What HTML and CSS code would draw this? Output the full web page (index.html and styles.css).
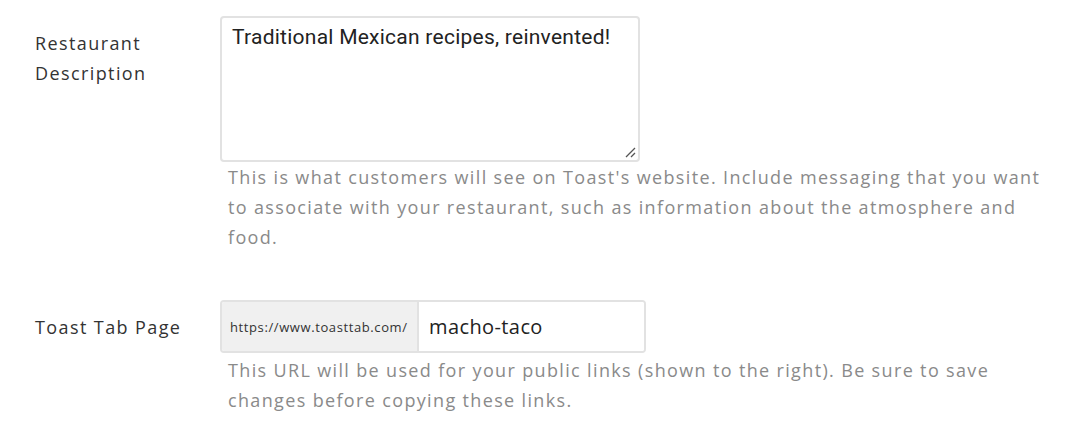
FILE: index.html
```html
<!DOCTYPE html>
<html lang="en">
<head>
<meta charset="utf-8">
<title>Restaurant settings</title>
<link rel="stylesheet" href="styles.css">
</head>
<body>
<form class="settings">
  <div class="row row-desc">
    <label class="label" for="desc">Restaurant<br>Description</label>
    <div class="field">
      <div class="textarea-wrap">
        <textarea id="desc" class="textarea">Traditional Mexican recipes, reinvented!</textarea>
        <svg class="grip" width="12" height="12" viewBox="0 0 12 12"><path d="M11 2 L2 11 M11 7 L7 11" stroke="#555" stroke-width="1.3" fill="none"/></svg>
      </div>
      <p class="help">This is what customers will see on Toast's website. Include messaging that you want to associate with your restaurant, such as information about the atmosphere and food.</p>
    </div>
  </div>
  <div class="row row-url">
    <label class="label" for="slug">Toast Tab Page</label>
    <div class="field">
      <div class="input-group">
        <span class="prefix">https://www.toasttab.com/</span>
        <input id="slug" class="input" type="text" value="macho-taco">
      </div>
      <p class="help help-url">This URL will be used for your public links (shown to the right). Be sure to save changes before copying these links.</p>
    </div>
  </div>
</form>
</body>
</html>
```
FILE: styles.css
```css
html, body {
  margin: 0;
  padding: 0;
  background: #ffffff;
}
body {
  font-family: "Open Sans", "Lato", sans-serif;
  color: #333;
}
.settings {
  padding: 16px 0 0 35px;
}
.row {
  display: grid;
  grid-template-columns: 185px 1fr;
}
.row-url {
  margin-top: 48px;
}
.label {
  padding-top: 12px;
  font-size: 18px;
  line-height: 30px;
  color: #333;
  letter-spacing: 1.4px;
}
.field {
  display: flex;
  flex-direction: column;
}
.textarea-wrap {
  position: relative;
  width: 420px;
  height: 146px;
}
.textarea {
  box-sizing: border-box;
  width: 100%;
  height: 100%;
  margin: 0;
  border: 2px solid #e2e2e2;
  border-radius: 4px;
  padding: 6px 10px;
  font-family: "Roboto", "Liberation Sans", sans-serif;
  font-size: 21px;
  line-height: 26px;
  letter-spacing: 0.25px;
  color: #222;
  resize: none;
  outline: none;
}
.grip {
  position: absolute;
  right: 4px;
  bottom: 4px;
}
.help {
  margin: 0;
  padding-left: 8px;
  max-width: 825px;
  font-size: 18px;
  line-height: 30px;
  color: #8a8a8a;
  letter-spacing: 1.35px;
}
.help-url {
  margin-top: 2px;
}
.input-group {
  box-sizing: border-box;
  display: flex;
  width: 426px;
  height: 53px;
  border: 2px solid #e2e2e2;
  border-radius: 4px;
  overflow: hidden;
}
.prefix {
  display: flex;
  align-items: center;
  width: 197px;
  padding-left: 8px;
  box-sizing: border-box;
  background: #f0f0f0;
  border-right: 2px solid #e2e2e2;
  font-size: 13px;
  letter-spacing: 0.6px;
  color: #333;
}
.input {
  flex: 1;
  min-width: 0;
  border: 0;
  margin: 0;
  padding: 0 10px;
  font-family: "Open Sans", "Lato", sans-serif;
  font-size: 20px;
  letter-spacing: 0.4px;
  color: #222;
  outline: none;
}
```
